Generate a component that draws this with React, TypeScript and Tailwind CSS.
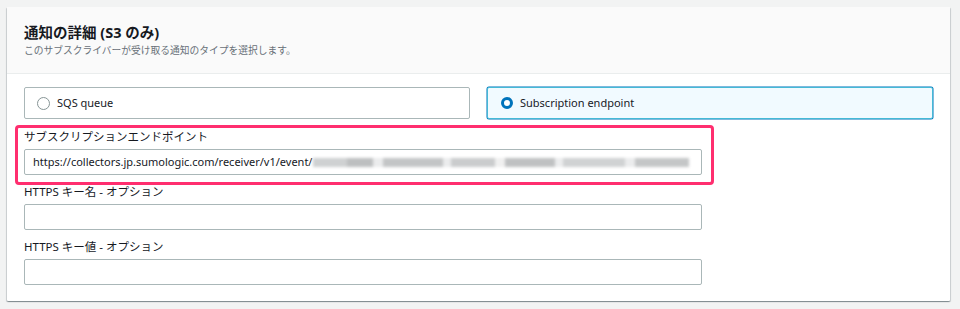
import React from "react";

const blur = [
  { w: 34, c: "bg-[#cfd1d2]" },
  { w: 26, c: "bg-[#bdbfc0]" },
  { w: 10, c: "bg-[#ebeced]" },
  { w: 60, c: "bg-[#c3c5c6]" },
  { w: 8, c: "bg-[#ebeced]" },
  { w: 44, c: "bg-[#cacccd]" },
  { w: 10, c: "bg-[#f0f0f0]" },
  { w: 50, c: "bg-[#bfc1c2]" },
  { w: 8, c: "bg-[#ecedee]" },
  { w: 62, c: "bg-[#d0d2d3]" },
  { w: 10, c: "bg-[#ebeced]" },
  { w: 54, c: "bg-[#c4c6c7]" },
];

function Field({ label, children }: { label: string; children?: React.ReactNode }) {
  return (
    <div className="w-[678px]">
      <div className="text-[11.5px] leading-[18px] text-[#16191f] mb-[3px]">{label}</div>
      <div className="h-[26px] bg-white border border-[#aab7b8] rounded-[2px] flex items-center px-2 overflow-hidden">
        {children}
      </div>
    </div>
  );
}

export default function App() {
  return (
    <div
      className="w-[960px] h-[309px] bg-[#f2f3f3] pt-[7px] pl-[7px] pr-[10px]"
      style={{ fontFamily: '"Noto Sans", "Noto Sans CJK JP", sans-serif' }}
    >
      <div className="bg-white rounded-[1px] shadow-[0_1px_1px_0_rgba(0,28,36,0.3),1px_1px_1px_0_rgba(0,28,36,0.15),-1px_1px_1px_0_rgba(0,28,36,0.15)]">
        {/* header */}
        <div className="bg-[#fafafa] border-b border-[#eaeded] px-[17px] pt-[14px] pb-[15px]">
          <h2 className="text-[14.5px] leading-[22px] font-bold text-[#16191f]">通知の詳細 (S3 のみ)</h2>
          <p className="text-[9.75px] leading-[15px] text-[#687078]">
            このサブスクライバーが受け取る通知のタイプを選択します。
          </p>
        </div>

        {/* body */}
        <div className="px-[17px] pt-[13px] pb-[16px]">
          <div className="grid grid-cols-2 gap-[17px] mb-[6px]">
            <div className="h-[32px] border border-[#aab7b8] rounded-[2px] flex items-center pl-[12px] gap-[7px]">
              <span className="w-[13px] h-[13px] rounded-full border border-[#879596] bg-white" />
              <span className="text-[11px] text-[#16191f]">SQS queue</span>
            </div>
            <div className="h-[32px] border border-[#44b9d6] bg-[#f1faff] rounded-[2px] flex items-center pl-[13px] gap-[7px] shadow-[0_0_0_0.5px_#0073bb]">
              <span className="w-[12px] h-[12px] rounded-full border-[3.5px] border-[#0073bb] bg-white" />
              <span className="text-[11px] text-[#16191f]">Subscription endpoint</span>
            </div>
          </div>

          <div className="flex flex-col items-start gap-[8px]">
            <div className="relative pt-[3px]">
              <Field label="サブスクリプションエンドポイント">
                <span className="text-[11px] text-[#16191f] whitespace-nowrap">
                  https://collectors.jp.sumologic.com/receiver/v1/event/
                </span>
                <div className="flex h-[9px] blur-[1.5px] ml-px">
                  {blur.map((b, i) => (
                    <div key={i} className={`h-full shrink-0 ${b.c}`} style={{ width: b.w }} />
                  ))}
                </div>
              </Field>
              <div className="absolute top-0 -left-[9px] -right-[12px] -bottom-[10px] border-[3px] border-[#ff2e6f] rounded-[4px] pointer-events-none" />
            </div>
            <Field label="HTTPS キー名 - オプション" />
            <Field label="HTTPS キー値 - オプション" />
          </div>
        </div>
      </div>
    </div>
  );
}
